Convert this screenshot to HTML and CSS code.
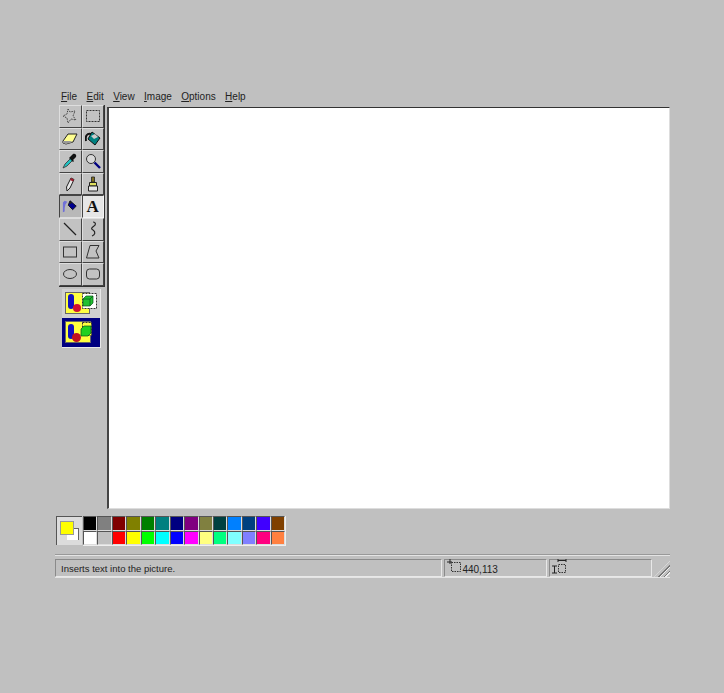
FILE: index.html
```html
<!DOCTYPE html>
<html lang="en">
<head>
    <meta charset="UTF-8">
    <title>Paint</title>
    <link rel="stylesheet" href="styles.css">
</head>
<body>
    <div class="window">
        <div class="menubar">
            <span class="menu"><u>F</u>ile</span>
            <span class="menu"><u>E</u>dit</span>
            <span class="menu"><u>V</u>iew</span>
            <span class="menu"><u>I</u>mage</span>
            <span class="menu"><u>O</u>ptions</span>
            <span class="menu"><u>H</u>elp</span>
        </div>

        <div class="workspace">
            <div class="toolbox">
                <div class="tools">
                    <div class="tool"><svg viewBox="0 0 16 16"><path d="M6 1 8 4 13 3 11 8 14 12 9 11 6 15 5 10 1 8 5 6Z" fill="none" stroke="#444" stroke-dasharray="1.500 1"/></svg></div>
                    <div class="tool"><svg viewBox="0 0 16 16"><rect x="1.500" y="2.500" width="13" height="11" fill="none" stroke="#333" stroke-dasharray="2 1"/></svg></div>
                    <div class="tool"><svg viewBox="0 0 16 16"><path d="M1 10 6 3H15L11 11 4 13 1 12Z" fill="#ffff90" stroke="#222"/><path d="M1 10 8 10 11 11 4 13 1 12Z" fill="#999"/></svg></div>
                    <div class="tool"><svg viewBox="0 0 16 16"><path d="M1 10C0 5 2 2 6 3" fill="none" stroke="#111" stroke-width="2"/><path d="M7 1 15 7 10 14 3 8Z" fill="#008080" stroke="#111"/><path d="M6 5 10 3 13 6 9 8Z" fill="#ccc"/></svg></div>
                    <div class="tool"><svg viewBox="0 0 16 16"><path d="M1 15 3 11 9 5 11 7 5 13Z" fill="#20c0c0" stroke="#333" stroke-width=".8"/><path d="M8 4 11 1C13 0 15 2 14 4L11 7 12 8 11 9 7 5 8 4Z" fill="#111"/></svg></div>
                    <div class="tool"><svg viewBox="0 0 16 16"><circle cx="6" cy="6" r="4.500" fill="#d8d8d8" stroke="#333"/><path d="M9.500 9.500 15 15" stroke="#000080" stroke-width="2.400"/></svg></div>
                    <div class="tool"><svg viewBox="0 0 16 16"><path d="M5 15 4.500 11 9 2 12 3.500 8 12Z" fill="#e8e8e8" stroke="#222"/><path d="M9 2 12 3.500 11 5.500 8 4Z" fill="#a02030"/></svg></div>
                    <div class="tool"><svg viewBox="0 0 16 16"><path d="M6.500 1H9.500V6H6.500Z" fill="#807020" stroke="#222" stroke-width=".8"/><path d="M4.500 6.500H11.500V10H4.500Z" fill="#e0e060" stroke="#222"/><path d="M3.500 10H12.500V15H3.500Z" fill="#e8e8e8" stroke="#222"/></svg></div>
                    <div class="tool pressed-dark"><svg viewBox="0 0 18 16"><path d="M1 3 3 1 6 2 4 5 3 9 3 13 1 14Z" fill="#7070d8"/><path d="M9 1 16 7 12 11 7 6Z" fill="#000090" stroke="#111"/><path d="M8 3 10 1.500 11.500 3 9.500 5Z" fill="#222"/></svg></div>
                    <div class="tool active"><span class="tool-letter">A</span></div>
                    <div class="tool"><svg viewBox="0 0 16 16"><path d="M2 2 14 14" stroke="#222" stroke-width="1.300"/></svg></div>
                    <div class="tool"><svg viewBox="0 0 16 16"><path d="M8 1C11 1 11 4 9 5 6 7 6 8 8 9 11 11 10 14 7 15" fill="none" stroke="#222" stroke-width="1.200"/></svg></div>
                    <div class="tool"><svg viewBox="0 0 16 16"><rect x="1.500" y="3" width="13" height="10" fill="none" stroke="#333"/></svg></div>
                    <div class="tool"><svg viewBox="0 0 16 16"><path d="M5 1.500H14L11 7 14 14H1.500Z" fill="none" stroke="#333"/></svg></div>
                    <div class="tool"><svg viewBox="0 0 16 16"><ellipse cx="8" cy="8" rx="6.500" ry="4.500" fill="none" stroke="#333"/></svg></div>
                    <div class="tool"><svg viewBox="0 0 16 16"><rect x="1.500" y="3" width="13" height="10" rx="3" fill="none" stroke="#333"/></svg></div>
                </div>

                <div class="options">
                    <div class="option">
                        <svg viewBox="0 0 32 24" width="32" height="24">
                            <rect x="0.500" y="1.500" width="24" height="21" fill="#ffff40" stroke="#666"/>
                            <rect x="17.500" y="2.500" width="14" height="15" fill="#fff" stroke="#333" stroke-dasharray="2 1"/>
                            <rect x="3" y="3" width="6" height="15" rx="3" fill="#1010c0"/>
                            <circle cx="12" cy="17" r="4" fill="#d01030"/>
                            <path d="M18 8 21 5H28V12L25 15H18Z" fill="#20c030" stroke="#085018" stroke-width=".7"/>
                            <path d="M18 8H25V15M25 8 28 5" fill="none" stroke="#085018" stroke-width=".7"/>
                        </svg>
                    </div>
                    <div class="option selected">
                        <svg viewBox="0 0 32 24" width="32" height="24">
                            <rect x="0.500" y="1.500" width="25" height="21" fill="#ffff40" stroke="#666"/>
                            <rect x="17.500" y="2.500" width="9" height="13" fill="#ffff40" stroke="#333" stroke-dasharray="2 1"/>
                            <rect x="3" y="4" width="6" height="15" rx="3" fill="#1010c0"/>
                            <circle cx="11.500" cy="17.500" r="4.500" fill="#c01020"/>
                            <path d="M16 9 19 6H26V13L23 16H16Z" fill="#20d020" stroke="#085018" stroke-width=".7"/>
                        </svg>
                    </div>
                </div>
            </div>
            <div class="canvas"></div>
        </div>

        <div class="colorbar">
            <div class="current">
                <div class="bg-color"></div>
                <div class="fg-color"></div>
            </div>
            <div class="palette">
                <span class="swatch c-000000"></span>
                <span class="swatch c-808080"></span>
                <span class="swatch c-800000"></span>
                <span class="swatch c-808000"></span>
                <span class="swatch c-008000"></span>
                <span class="swatch c-008080"></span>
                <span class="swatch c-000080"></span>
                <span class="swatch c-800080"></span>
                <span class="swatch c-808040"></span>
                <span class="swatch c-004040"></span>
                <span class="swatch c-0080ff"></span>
                <span class="swatch c-004080"></span>
                <span class="swatch c-4000ff"></span>
                <span class="swatch c-804000"></span>
                <span class="swatch c-ffffff"></span>
                <span class="swatch c-c0c0c0"></span>
                <span class="swatch c-ff0000"></span>
                <span class="swatch c-ffff00"></span>
                <span class="swatch c-00ff00"></span>
                <span class="swatch c-00ffff"></span>
                <span class="swatch c-0000ff"></span>
                <span class="swatch c-ff00ff"></span>
                <span class="swatch c-ffff80"></span>
                <span class="swatch c-00ff80"></span>
                <span class="swatch c-80ffff"></span>
                <span class="swatch c-8080ff"></span>
                <span class="swatch c-ff0080"></span>
                <span class="swatch c-ff8040"></span>
            </div>
        </div>

        <div class="statusbar">
            <div class="panel panel-help">Inserts text into the picture.</div>
            <div class="panel panel-pos">
                <svg viewBox="0 0 14 14" width="14" height="14"><path d="M0 3H5M3 0V5" stroke="#222" fill="none"/><rect x="4.500" y="3.500" width="9" height="9" fill="none" stroke="#333" stroke-dasharray="1.500 1"/></svg>
                <span>440,113</span>
            </div>
            <div class="panel panel-size">
                <svg viewBox="0 0 16 16" width="16" height="16"><path d="M7 1V4M15 1V4M7 2.500H15" stroke="#222" fill="none"/><path d="M1 8H6M1 15H6M3.500 8V15" stroke="#222" fill="none"/><rect x="7.500" y="6.500" width="7" height="8" fill="none" stroke="#333" stroke-dasharray="1.500 1"/></svg>
            </div>
            <div class="grip"></div>
        </div>
    </div>
</body>
</html>
```

FILE: styles.css
```css
html, body {
    margin: 0;
    padding: 0;
}

body {
    width: 724px;
    height: 693px;
    background-color: #c0c0c0;
    font-family: "Liberation Sans", Arial, sans-serif;
    font-size: 9.5px;
    color: #222;
    overflow: hidden;
}

.window {
    width: 615px;
    margin: 88px 0 0 55px;
    display: flex;
    flex-direction: column;
}

.menubar {
    height: 18px;
    display: flex;
    align-items: center;
    gap: 9.4px;
    padding-left: 6px;
    line-height: 18px;
    font-size: 10px;
}

.workspace {
    display: flex;
    height: 403px;
}

.toolbox {
    width: 52px;
    padding: 0 0 0 4px;
    box-sizing: border-box;
    flex-shrink: 0;
}

.tools {
    display: grid;
    grid-template-columns: repeat(2, 22.5px);
    grid-auto-rows: 22.6px;
    margin-top: -1px;
    width: 45px;
    border-right: 1px solid #333;
    border-bottom: 1px solid #333;
}

.tool {
    display: flex;
    align-items: center;
    justify-content: center;
    box-sizing: border-box;
    border-top: 1px solid #dedede;
    border-left: 1px solid #dedede;
    border-right: 1px solid #444;
    border-bottom: 1px solid #444;
    background-color: #c2c2c2;
}

.tool svg {
    width: 16px;
    height: 16px;
}

.tool.pressed-dark {
    background-color: #b8b8b8;
    border-color: #444 #ddd #ddd #444;
}

.tool.active {
    background-color: #e6e6e6;
    border-color: #444 #f4f4f4 #f4f4f4 #444;
}

.tool-letter {
    font-family: "Liberation Serif", serif;
    font-weight: bold;
    font-size: 17px;
    line-height: 17px;
    color: #111;
}

.options {
    width: 38px;
    height: 58px;
    margin-top: 2px;
    margin-left: 3px;
    background-color: #d0d0d0;
    border-right: 1px solid #e8e8e8;
    border-bottom: 1px solid #e8e8e8;
    display: flex;
    flex-direction: column;
}

.option {
    height: 29px;
    display: flex;
    align-items: center;
    justify-content: center;
}

.option.selected {
    background-color: #000080;
}

.canvas {
    flex: 1;
    margin-top: 1px;
    background-color: #fff;
    border-left: 2px solid #444;
    border-top: 1px solid #333;
    border-right: 1px solid #ddd;
    border-bottom: 1px solid #ddd;
}

.colorbar {
    height: 45px;
    display: flex;
    align-items: flex-start;
    padding: 7px 0 0 1px;
    box-sizing: border-box;
}

.current {
    position: relative;
    width: 26px;
    height: 29px;
    background-color: #dcdcdc;
    border-top: 1px solid #555;
    border-left: 1px solid #555;
    box-sizing: border-box;
}

.fg-color {
    position: absolute;
    left: 3px;
    top: 4px;
    width: 12px;
    height: 12px;
    background-color: #ffff00;
    border: 1px solid #999;
}

.bg-color {
    position: absolute;
    left: 10px;
    top: 11px;
    width: 11px;
    height: 11px;
    background-color: #fff;
    border-top: 1px solid #666;
    border-right: 1px solid #666;
}

.palette {
    display: grid;
    grid-template-columns: repeat(14, 14.44px);
    grid-auto-rows: 14.5px;
    margin-left: 1px;
    border-right: 1px solid #eee;
    border-bottom: 1px solid #eee;
}

.swatch {
    box-sizing: border-box;
    border-top: 1px solid #555;
    border-left: 1px solid #555;
    border-right: 1px solid #ddd;
    border-bottom: 1px solid #ddd;
}

.c-000000 { background-color: #000000; }
.c-808080 { background-color: #808080; }
.c-800000 { background-color: #800000; }
.c-808000 { background-color: #808000; }
.c-008000 { background-color: #008000; }
.c-008080 { background-color: #008080; }
.c-000080 { background-color: #000080; }
.c-800080 { background-color: #800080; }
.c-808040 { background-color: #808040; }
.c-004040 { background-color: #004040; }
.c-0080ff { background-color: #0080ff; }
.c-004080 { background-color: #004080; }
.c-4000ff { background-color: #4000ff; }
.c-804000 { background-color: #804000; }
.c-ffffff { background-color: #ffffff; }
.c-c0c0c0 { background-color: #c0c0c0; }
.c-ff0000 { background-color: #ff0000; }
.c-ffff00 { background-color: #ffff00; }
.c-00ff00 { background-color: #00ff00; }
.c-00ffff { background-color: #00ffff; }
.c-0000ff { background-color: #0000ff; }
.c-ff00ff { background-color: #ff00ff; }
.c-ffff80 { background-color: #ffff80; }
.c-00ff80 { background-color: #00ff80; }
.c-80ffff { background-color: #80ffff; }
.c-8080ff { background-color: #8080ff; }
.c-ff0080 { background-color: #ff0080; }
.c-ff8040 { background-color: #ff8040; }

.statusbar {
    display: flex;
    height: 23px;
    padding-top: 3px;
    border-top: 1px solid #e4e4e4;
    border-bottom: 1px solid #e4e4e4;
    box-sizing: border-box;
    box-shadow: 0 -1px 0 #999;
    margin-top: 1px;
    gap: 2px;
}

.panel {
    box-sizing: border-box;
    height: 18px;
    border-top: 1px solid #8a8a8a;
    border-left: 1px solid #8a8a8a;
    border-right: 1px solid #e8e8e8;
    border-bottom: 1px solid #e8e8e8;
    display: flex;
    align-items: flex-end;
    line-height: 13px;
}

.panel-help {
    width: 390px;
    padding: 0 0 1px 5px;
}

.panel-pos {
    width: 103px;
    padding-left: 2px;
    gap: 1px;
    font-size: 10px;
}

.panel-pos svg {
    align-self: flex-start;
    margin-top: -1px;
}

.panel-size {
    width: 104px;
    padding-left: 1px;
}

.panel-size svg {
    align-self: flex-start;
    margin-top: -2px;
}

.grip {
    width: 16px;
    height: 16px;
    align-self: flex-end;
    background-image: repeating-linear-gradient(135deg, #c0c0c0 0, #c0c0c0 2px, #777 2px, #777 3px, #eee 3px, #eee 4px);
    clip-path: polygon(100% 0, 100% 100%, 0 100%);
}
```
